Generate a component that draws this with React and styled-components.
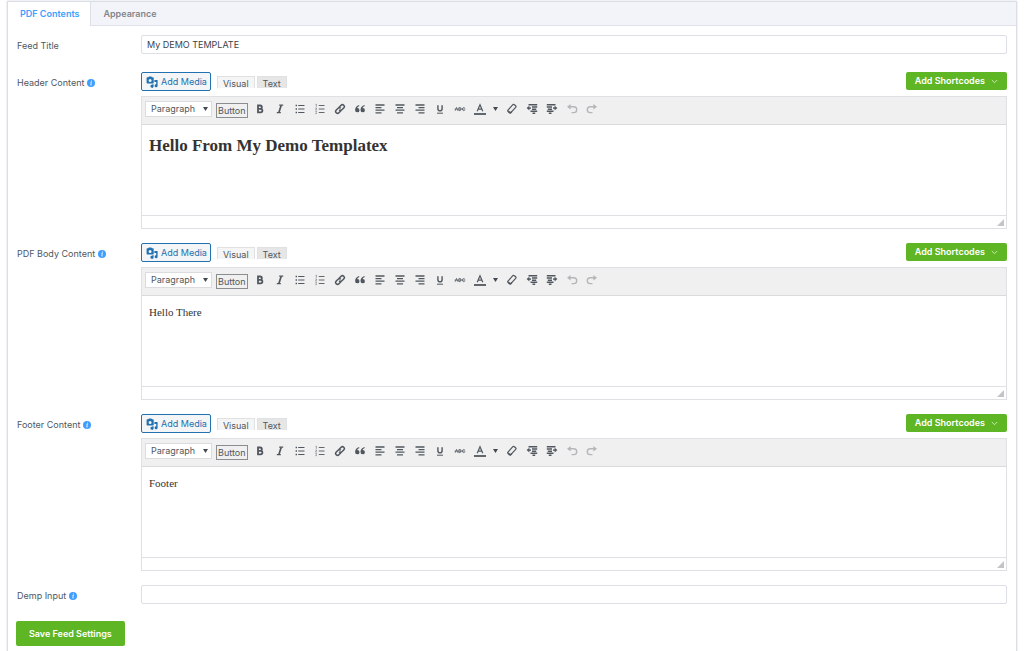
import React, { useState } from "react";
import styled, { createGlobalStyle, css } from "styled-components";

const GlobalStyle = createGlobalStyle`
  *,
  *::before,
  *::after {
    box-sizing: border-box;
  }
  body {
    margin: 0;
    background: #fff;
    color: #50575e;
    font-family: Inter, "Liberation Sans", sans-serif;
    font-size: 9px;
    line-height: 12px;
  }
  button,
  input,
  select {
    font: inherit;
    color: inherit;
    margin: 0;
  }
  button {
    cursor: pointer;
  }
`;

const Page = styled.main`
  padding: 1px 7px 0;
`;

const Panel = styled.section`
  border: 1px solid #dcdee6;
  border-bottom: none;
  box-shadow: 0 0 2px #d4d6e0;
  background: #fff;
`;

const TabBar = styled.nav`
  display: flex;
  height: 24px;
  background: #f3f4f9;
  border-bottom: 1px solid #e0e2ea;
`;

const TabButton = styled.button`
  height: 24px;
  padding: 0 12px;
  border: none;
  background: none;
  font-weight: 600;
  color: #83868c;

  ${(props) =>
    props.$active &&
    css`
      background: #fff;
      color: #409eff;
      border-right: 1px solid #dcdfe6;
      padding: 0 11px 0 12px;
    `}
`;

const Form = styled.form`
  display: flex;
  flex-direction: column;
  gap: 14px;
  padding: 9px 9px 6px 8px;
`;

const Row = styled.div`
  display: grid;
  grid-template-columns: 125px minmax(0, 1fr);
  align-items: start;
  margin-bottom: ${(props) => (props.$spaced ? "4px" : "0")};
`;

const RowLabel = styled.label`
  display: flex;
  align-items: center;
  gap: 3px;
  padding: 5px 0 0 1px;
`;

const TextInput = styled.input`
  width: 100%;
  height: 19px;
  padding: 0 5px;
  border: 1px solid #dcdfe6;
  border-radius: 2px;
  background: #fff;
  color: #3c434a;
`;

const EditorHead = styled.div`
  display: flex;
  align-items: flex-start;
  height: 24px;
`;

const MediaButton = styled.button`
  display: flex;
  align-items: center;
  gap: 3px;
  height: 19px;
  padding: 0 3px 0 4px;
  margin-right: 6px;
  border: 1px solid #2271b1;
  border-radius: 2px;
  background: #f3f5f6;
  color: #2271b1;
`;

const ModeTabs = styled.div`
  display: flex;
  gap: 2px;
  padding-top: 4px;
`;

const ModeButton = styled.button`
  height: 12px;
  padding: 3px 5px 0;
  border: 1px solid #e0e1e3;
  border-bottom: none;
  background: ${(props) => (props.$active ? "#f5f5f5" : "#e6e6e6")};
  line-height: 8px;
`;

const ShortcodeButton = styled.button`
  display: flex;
  align-items: center;
  gap: 6px;
  height: 18px;
  margin-left: auto;
  padding: 0 9px;
  border: none;
  border-radius: 2px;
  background: #5fb624;
  color: #fff;
  font-weight: 600;
`;

const EditorBox = styled.div`
  border: 1px solid #dfe0e3;
`;

const Toolbar = styled.div`
  display: flex;
  align-items: center;
  height: 28px;
  padding: 0 3px 3px;
  background: #f0f0f0;
  border-bottom: 1px solid #d9dadc;
`;

const SelectWrap = styled.div`
  position: relative;
  margin-right: 4px;

  svg {
    position: absolute;
    right: 4px;
    top: 6px;
    pointer-events: none;
  }
`;

const FormatSelect = styled.select`
  display: block;
  appearance: none;
  width: 67px;
  height: 16px;
  padding: 0 5px;
  border: 1px solid #dcdcde;
  border-radius: 0;
  background: #fff;
`;

const InsertButton = styled.button`
  height: 15px;
  padding: 0 1px;
  margin: 3px 2px 0 0;
  border: 1px solid #8a8d91;
  background: none;
  line-height: 12px;
`;

const ToolButton = styled.button`
  display: flex;
  align-items: center;
  justify-content: center;
  width: ${(props) => (props.$narrow ? "12px" : "20px")};
  height: 18px;
  padding: 0;
  border: none;
  background: none;
  color: #50575e;

  &:disabled {
    color: #b4b7ba;
  }
`;

const EditArea = styled.div`
  height: 90px;
  padding: 9px 7px;
  overflow: auto;
  outline: none;
  color: #333;
  font-family: Georgia, "Liberation Serif", serif;
  font-size: 11px;
  line-height: 14px;

  h1 {
    margin: 2px 0 0;
    font-size: 17px;
    line-height: 20px;
  }
  p {
    margin: 0;
  }
`;

const StatusBar = styled.div`
  display: flex;
  justify-content: flex-end;
  align-items: flex-end;
  height: 13px;
  padding: 2px;
  border-top: 1px solid #dfe0e3;
`;

const SaveButton = styled.button`
  align-self: flex-start;
  height: 25px;
  margin-top: 3px;
  padding: 0 13px;
  border: none;
  border-radius: 2px;
  background: #5fb624;
  color: #fff;
  font-weight: 600;
`;

const Icon = ({ children, size = 12 }) => (
  <svg
    width={size}
    height={size}
    viewBox="0 0 12 12"
    fill="none"
    stroke="currentColor"
    aria-hidden="true"
  >
    {children}
  </svg>
);

const InfoIcon = () => (
  <svg width="8" height="8" viewBox="0 0 8 8" aria-hidden="true">
    <circle cx="4" cy="4" r="4" fill="#409eff" />
    <circle cx="4.5" cy="2" r="0.6" fill="#fff" />
    <path d="M3.4 3.4h1L3.7 6.1h.9" fill="none" stroke="#fff" strokeWidth="0.8" />
  </svg>
);

const MediaIcon = () => (
  <svg width="12" height="12" viewBox="0 0 12 12" aria-hidden="true">
    <path
      fill="currentColor"
      fillRule="evenodd"
      d="M1.4 1.3h.8L2.9.5h2.4l.7.8h.9c.5 0 .8.3.8.8v4.7c0 .5-.3.8-.8.8H1.4c-.5 0-.8-.3-.8-.8V2.1c0-.5.3-.8.8-.8zM4.1 2.9a1.5 1.5 0 1 0 0 3 1.5 1.5 0 0 0 0-3z"
    />
    <path
      fill="currentColor"
      d="M8.4 4h3.2v5.8a1.5 1.5 0 1 1-1.4-1.5V6H8.4zM6.3 8.2h1.3v2.1a1.6 1.6 0 1 1-1.3-1.6z"
    />
  </svg>
);

const CaretIcon = () => (
  <svg width="5" height="4" viewBox="0 0 5 4" aria-hidden="true">
    <path d="M0 0h5L2.5 4z" fill="#444a50" />
  </svg>
);

const alignLines = {
  left: ["M1.5 2h9", "M1.5 4.6h6", "M1.5 7.2h9", "M1.5 9.8h6"],
  center: ["M1.5 2h9", "M3 4.6h6", "M1.5 7.2h9", "M3 9.8h6"],
  right: ["M1.5 2h9", "M4.5 4.6h6", "M1.5 7.2h9", "M4.5 9.8h6"],
};

const AlignIcon = ({ side }) => (
  <Icon>
    <path d={alignLines[side].join("")} strokeWidth="1.3" />
  </Icon>
);

const tools = [
  {
    name: "Bold",
    icon: (
      <Icon>
        <path
          d="M4 2.5h2.2a1.6 1.6 0 0 1 0 3.3H4zM4 5.8h2.6a1.8 1.8 0 0 1 0 3.6H4z"
          strokeWidth="1.8"
        />
      </Icon>
    ),
  },
  {
    name: "Italic",
    icon: (
      <Icon>
        <path d="M5.2 2.2h4M2.8 9.6h4" strokeWidth="1.2" />
        <path d="M7.2 2.2L4.9 9.6" strokeWidth="1.7" />
      </Icon>
    ),
  },
  {
    name: "Bulleted list",
    icon: (
      <Icon>
        <path d="M4.2 2.5h6.3M4.2 6h6.3M4.2 9.5h6.3" strokeWidth="1" />
        <path d="M1.6 2.5H3M1.6 6H3M1.6 9.5H3" strokeWidth="1.3" />
      </Icon>
    ),
  },
  {
    name: "Numbered list",
    icon: (
      <Icon>
        <path d="M4.8 2.5h5.7M4.8 6h5.7M4.8 9.5h5.7" strokeWidth="0.9" />
        <path
          d="M1.6 1.5l.8-.4v2.7M1.3 5h1.2v.9L1.4 7h1.3M1.3 8.4h1.3L2 9.4l.7.6-.4.7h-1"
          strokeWidth="0.5"
        />
      </Icon>
    ),
  },
  {
    name: "Insert link",
    icon: (
      <Icon>
        <g transform="rotate(-45 6 6)" strokeWidth="1.5">
          <path d="M6 7.9H2.6a1.9 1.9 0 0 1 0-3.8h2.6a1.9 1.9 0 0 1 1.9 2" />
          <path d="M6 4.1h3.4a1.9 1.9 0 0 1 0 3.8H6.8a1.9 1.9 0 0 1-1.9-2" />
        </g>
      </Icon>
    ),
  },
  {
    name: "Blockquote",
    icon: (
      <Icon>
        <path
          d="M5.2 2C2.7 2.6 1.1 4.4 1.1 7a2.2 2.2 0 1 0 2.2-2.1c.2-.8.9-1.3 1.9-1.6zM10.6 2C8.1 2.6 6.5 4.4 6.5 7a2.2 2.2 0 1 0 2.2-2.1c.2-.8.9-1.3 1.9-1.6z"
          fill="currentColor"
          stroke="none"
        />
      </Icon>
    ),
  },
  { name: "Align left", icon: <AlignIcon side="left" /> },
  { name: "Align center", icon: <AlignIcon side="center" /> },
  { name: "Align right", icon: <AlignIcon side="right" /> },
  {
    name: "Underline",
    icon: (
      <Icon>
        <path d="M3.9 2.2v3.6a2.1 2.1 0 0 0 4.2 0V2.2" strokeWidth="1.4" />
        <path d="M3 10.2h6" strokeWidth="1" />
      </Icon>
    ),
  },
  {
    name: "Strikethrough",
    icon: (
      <Icon>
        <path
          d="M1.1 7.8l1.4-3.4 1.4 3.4M4.9 4.6v3h1.3a.8.8 0 0 0 0-1.5.7.7 0 0 0 0-1.5zM10.8 5a1.5 1.5 0 1 0 0 2.2"
          strokeWidth="0.8"
        />
        <path d="M.6 6.1h10.8" strokeWidth="0.7" />
      </Icon>
    ),
  },
  {
    name: "Text color",
    icon: (
      <Icon>
        <path d="M3.2 8.2L6 1.7l2.8 6.5M4.2 6.2h3.6" strokeWidth="1.2" />
        <path d="M0 11h12" strokeWidth="1.8" />
      </Icon>
    ),
  },
  { name: "Choose text color", icon: <CaretIcon />, narrow: true },
  {
    name: "Clear formatting",
    icon: (
      <Icon>
        <path
          d="M6.6 1.9L2 7.1a1.1 1.1 0 0 0 .1 1.5l1.2 1.1a1.1 1.1 0 0 0 1.5-.1l4.9-5.3a1.1 1.1 0 0 0 0-1.5L8.3 1.7a1.2 1.2 0 0 0-1.7.2z"
          strokeWidth="1.2"
        />
        <path d="M2.2 8l2.4 1.8L6 8.6" strokeWidth="1.3" />
      </Icon>
    ),
  },
  {
    name: "Decrease indent",
    icon: (
      <Icon>
        <path d="M2.5 1.8h8.7M6 4h5.2M6 6.2h4.2M4.5 8.3h6.7M6.5 10.2h2.7" strokeWidth="1.4" />
        <path d="M2 5.1h3" strokeWidth="1.4" />
        <path d="M3.4 2.8v4.6L.6 5.1z" fill="currentColor" stroke="none" />
      </Icon>
    ),
  },
  {
    name: "Increase indent",
    icon: (
      <Icon>
        <path d="M.8 1.8h8.7M.8 4H6M1.8 6.2H6M.8 8.3h6.7M2.8 10.2h2.7" strokeWidth="1.4" />
        <path d="M7 5.1h3" strokeWidth="1.4" />
        <path d="M8.6 2.8v4.6l2.8-2.3z" fill="currentColor" stroke="none" />
      </Icon>
    ),
  },
  {
    name: "Undo",
    disabled: true,
    icon: (
      <Icon>
        <path d="M2.4 3.8h5.4a2.8 2.8 0 0 1 0 5.8H5.5" strokeWidth="1.4" />
        <path d="M4.6 1v5.6L1 3.8z" fill="currentColor" stroke="none" />
      </Icon>
    ),
  },
  {
    name: "Redo",
    disabled: true,
    icon: (
      <Icon>
        <path d="M9.6 3.8H4.2a2.8 2.8 0 0 0 0 5.8h2.3" strokeWidth="1.4" />
        <path d="M7.4 1v5.6L11 3.8z" fill="currentColor" stroke="none" />
      </Icon>
    ),
  },
];

const Editor = ({ id, label, children }) => {
  const [mode, setMode] = useState("Visual");

  return (
    <Row>
      <RowLabel as="div" id={`${id}-label`}>
        {label}
        <InfoIcon />
      </RowLabel>
      <div>
        <EditorHead>
          <MediaButton type="button">
            <MediaIcon />
            Add Media
          </MediaButton>
          <ModeTabs>
            {["Visual", "Text"].map((item) => (
              <ModeButton
                key={item}
                type="button"
                $active={mode === item}
                onClick={() => setMode(item)}
              >
                {item}
              </ModeButton>
            ))}
          </ModeTabs>
          <ShortcodeButton type="button">
            Add Shortcodes
            <svg width="7" height="5" viewBox="0 0 7 5" aria-hidden="true">
              <path d="M.8 1l2.7 2.7L6.2 1" fill="none" stroke="#d5efc0" strokeWidth="0.9" />
            </svg>
          </ShortcodeButton>
        </EditorHead>
        <EditorBox>
          <Toolbar>
            <SelectWrap>
              <FormatSelect aria-label="Format" defaultValue="Paragraph">
                <option>Paragraph</option>
                <option>Heading 1</option>
                <option>Heading 2</option>
              </FormatSelect>
              <CaretIcon />
            </SelectWrap>
            <InsertButton type="button">Button</InsertButton>
            {tools.map((tool) => (
              <ToolButton
                key={tool.name}
                type="button"
                title={tool.name}
                aria-label={tool.name}
                disabled={tool.disabled}
                $narrow={tool.narrow}
              >
                {tool.icon}
              </ToolButton>
            ))}
          </Toolbar>
          <EditArea
            contentEditable
            suppressContentEditableWarning
            role="textbox"
            aria-multiline="true"
            aria-labelledby={`${id}-label`}
          >
            {children}
          </EditArea>
          <StatusBar>
            <svg width="7" height="7" viewBox="0 0 7 7" aria-hidden="true">
              <path d="M7 0v7H0z" fill="#c3c4c7" />
            </svg>
          </StatusBar>
        </EditorBox>
      </div>
    </Row>
  );
};

export default function App() {
  const [tab, setTab] = useState("PDF Contents");
  const [title, setTitle] = useState("My DEMO TEMPLATE");
  const [demo, setDemo] = useState("");

  return (
    <Page>
      <GlobalStyle />
      <Panel>
        <TabBar>
          {["PDF Contents", "Appearance"].map((item) => (
            <TabButton
              key={item}
              type="button"
              $active={tab === item}
              onClick={() => setTab(item)}
            >
              {item}
            </TabButton>
          ))}
        </TabBar>
        <Form onSubmit={(e) => e.preventDefault()}>
          <Row $spaced>
            <RowLabel htmlFor="feed-title">Feed Title</RowLabel>
            <TextInput
              id="feed-title"
              value={title}
              onChange={(e) => setTitle(e.target.value)}
            />
          </Row>
          <Editor id="header" label="Header Content">
            <h1>Hello From My Demo Templatex</h1>
          </Editor>
          <Editor id="body" label="PDF Body Content">
            <p>Hello There</p>
          </Editor>
          <Editor id="footer" label="Footer Content">
            <p>Footer</p>
          </Editor>
          <Row>
            <RowLabel htmlFor="demo-input">
              Demp Input
              <InfoIcon />
            </RowLabel>
            <TextInput
              id="demo-input"
              value={demo}
              onChange={(e) => setDemo(e.target.value)}
            />
          </Row>
          <SaveButton type="submit">Save Feed Settings</SaveButton>
        </Form>
      </Panel>
    </Page>
  );
}
